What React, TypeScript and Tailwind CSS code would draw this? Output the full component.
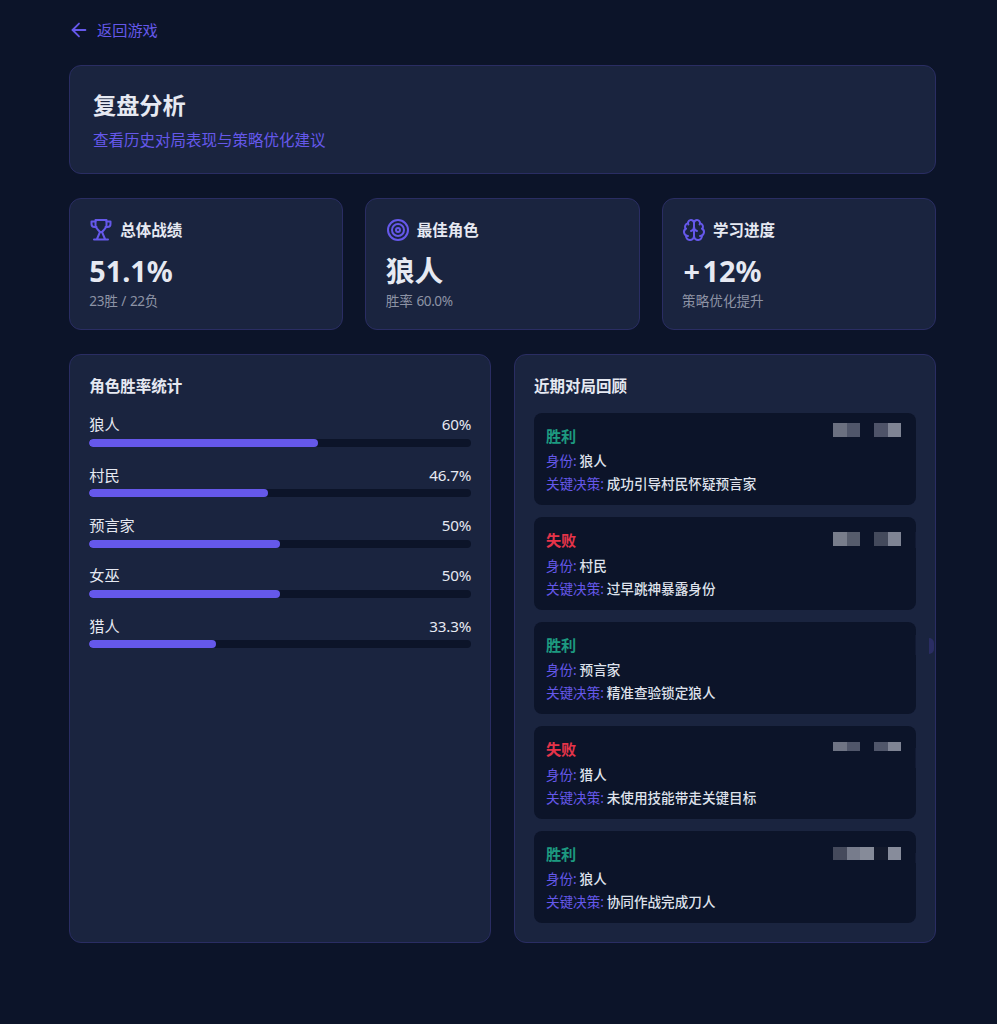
import { ArrowLeft, Target, Brain } from "lucide-react";
import type { ReactNode } from "react";

const roles = [
  { name: "狼人", label: "60%", w: "w-[60%]" },
  { name: "村民", label: "46.7%", w: "w-[46.7%]" },
  { name: "预言家", label: "50%", w: "w-[50%]" },
  { name: "女巫", label: "50%", w: "w-[50%]" },
  { name: "猎人", label: "33.3%", w: "w-[33.3%]" },
];

const widths = ["w-[14px]", "w-[13px]", "w-[14px]", "w-[14px]", "w-[13px]"];

const games = [
  { r: "胜利", win: true, role: "狼人", d: "成功引导村民怀疑预言家", top: "top-[10px]", h: "h-[14px]", c: ["bg-[#6b7080]", "bg-[#50566a]", "bg-transparent", "bg-[#4e5368]", "bg-[#7f8494]"], n: "" },
  { r: "失败", win: false, role: "村民", d: "过早跳神暴露身份", top: "top-[15px]", h: "h-[14px]", c: ["bg-[#787d8b]", "bg-[#565c6c]", "bg-transparent", "bg-[#444a5c]", "bg-[#7f8494]"], n: "top-[15px] h-[16px]" },
  { r: "胜利", win: true, role: "预言家", d: "精准查验锁定狼人", top: "top-[15px]", h: "h-[14px]", c: [], n: "top-[13px] h-[20px]" },
  { r: "失败", win: false, role: "猎人", d: "未使用技能带走关键目标", top: "top-[16px]", h: "h-[9px]", c: ["bg-[#6f7484]", "bg-[#50566a]", "bg-transparent", "bg-[#50566a]", "bg-[#7f8494]"], n: "top-[22px] h-[20px]" },
  { r: "胜利", win: true, role: "狼人", d: "协同作战完成刀人", top: "top-[16px]", h: "h-[13px]", c: ["bg-[#454a5c]", "bg-[#777c8c]", "bg-[#868b99]", "bg-[#141a2c]", "bg-[#878c9b]"], n: "top-[22px] h-[10px]" },
];

function TrophyIcon() {
  return (
    <svg width="24" height="24" viewBox="0 0 24 24" fill="none" stroke="currentColor" strokeWidth="2" strokeLinecap="round" strokeLinejoin="round">
      <path d="M6.500 2h11v5.500c0 2.600-3 4.500-4.500 6.500h-2C9.500 12 6.500 10.100 6.500 7.500z" />
      <path d="M6.500 3.500H2.500v2.500a3 3 0 0 0 3 3h2" />
      <path d="M17.500 3.500h4v2.500a3 3 0 0 1-3 3h-2" />
      <path d="M11 14l-3 7M13 14l3 7M5 21.500h14" />
    </svg>
  );
}

const stats: { icon: ReactNode; t: string; v: ReactNode; s: ReactNode }[] = [
  { icon: <TrophyIcon />, t: "总体战绩", v: "51.1%", s: <><span className="tracking-[-0.3px]">23</span>胜 / <span className="tracking-[-0.3px]">22</span>负</> },
  { icon: <Target size={24} strokeWidth={2} />, t: "最佳角色", v: "狼人", s: <>胜率 <span className="tracking-[-0.4px]">60.0%</span></> },
  { icon: <Brain size={24} strokeWidth={2} />, t: "学习进度", v: <><span className="ml-[1.5px] mr-[2.5px]">+</span>12%</>, s: "策略优化提升" },
];

export default function App() {
  return (
    <div className="min-h-[1024px] bg-[#0c1429] font-['Noto_Sans','Noto_Sans_CJK_SC',sans-serif] text-[#e6e9f2]">
      <div className="ml-[69px] w-[867px] pt-[18px]">
        <div className="flex h-[24px] items-center gap-[7px] -ml-[1px] text-[15.2px] text-[#6558ea]">
          <ArrowLeft size={22} strokeWidth={2} />
          <span>返回游戏</span>
        </div>

        <div className="mt-[23px] h-[109px] rounded-[12px] border border-[#2a2d63] bg-[#1a243f] px-[23px] pt-[20px]">
          <h1 className="text-[23.2px] font-bold leading-[38px]">复盘分析</h1>
          <p className="mt-[4px] text-[15.5px] leading-[25px] text-[#6558ea]">查看历史对局表现与策略优化建议</p>
        </div>

        <div className="mt-[24px] grid grid-cols-3 gap-[22.4px]">
          {stats.map(({ icon, t, v, s }) => (
            <div key={t} className="h-[132px] rounded-[12px] border border-[#2a2d63] bg-[#1a243f] px-[19.2px] pt-[19px]">
              <div className="flex h-[24px] items-center gap-[7px] text-[15.5px] font-bold leading-[23px]">
                <span className="text-[#6558ea]">{icon}</span>
                <span className="-translate-y-[0.5px]">{t}</span>
              </div>
              <div className="mt-[11px] text-[28.8px] font-bold leading-[35px]">{v}</div>
              <div className="mt-[2px] text-[13.6px] leading-[22px] text-[#8d93a5]">{s}</div>
            </div>
          ))}
        </div>

        <div className="mt-[24px] grid h-[589px] grid-cols-2 gap-[22.4px]">
          <div className="rounded-[12px] border border-[#2a2d63] bg-[#1a243f] px-[19.2px] pt-[18.5px]">
            <h2 className="text-[15.5px] font-bold leading-[25px]">角色胜率统计</h2>
            <div className="mt-[14.5px] flex flex-col gap-[16.4px]">
              {roles.map((r) => (
                <div key={r.name}>
                  <div className="flex h-[23.2px] items-center justify-between text-[15.2px]">
                    <span>{r.name}</span>
                    <span className="tracking-[-0.2px]">{r.label}</span>
                  </div>
                  <div className="mt-[2.8px] h-[8px] overflow-hidden rounded-full bg-[#0c1429]">
                    <div className={`h-full rounded-full bg-[#6558ea] ${r.w}`} />
                  </div>
                </div>
              ))}
            </div>
          </div>

          <div className="relative rounded-[12px] border border-[#2a2d63] bg-[#1a243f] px-[19.2px] pt-[18.5px]">
            <h2 className="text-[15.5px] font-bold leading-[25px]">近期对局回顾</h2>
            <div className="mt-[14.5px] flex flex-col gap-[12px]">
              {games.map((g, i) => (
                <div key={i} className="relative rounded-[8px] bg-[#0c1429] px-[12px] pb-[10px] pt-[11px]">
                  <div className={`text-[15.2px] font-bold leading-[24px] ${g.win ? "text-[#1d9a80]" : "text-[#e53449]"}`}>{g.r}</div>
                  <div className="mt-[2.2px] text-[13.6px] leading-[22px] text-[#6558ea]">
                    身份: <span className="-ml-[0.7px] font-medium text-[#dfe2ec]">{g.role}</span>
                  </div>
                  <div className="mt-[1.3px] text-[13.6px] leading-[22px] text-[#6558ea]">
                    关键决策: <span className="-ml-[0.7px] font-medium text-[#dfe2ec]">{g.d}</span>
                  </div>
                  {g.c.length > 0 && (
                    <div className={`absolute right-[15px] flex ${g.top} ${g.h}`}>
                      {g.c.map((c, j) => (
                        <div key={j} className={`${widths[j]} ${c}`} />
                      ))}
                    </div>
                  )}
                  {g.n && <div className={`absolute right-0 w-[1px] bg-[#121a33] ${g.n}`} />}
                </div>
              ))}
            </div>
            <div className="absolute left-[414px] top-[283px] h-[16px] w-[5px] rounded-r-full bg-[#2a2d63]" />
          </div>
        </div>
      </div>
    </div>
  );
}
